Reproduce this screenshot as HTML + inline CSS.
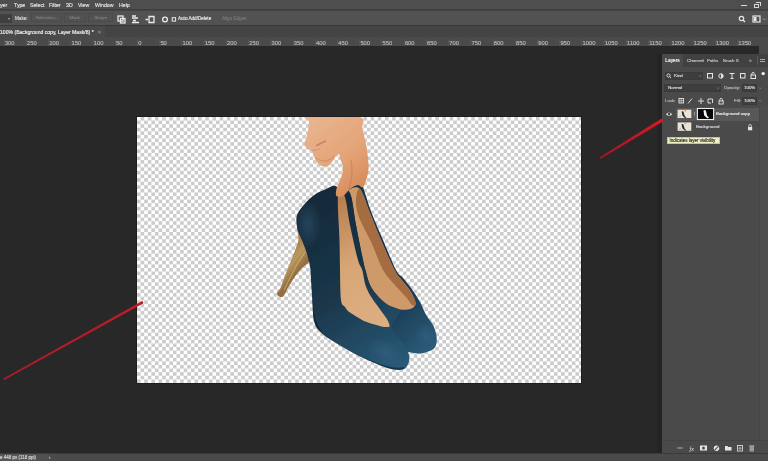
<!DOCTYPE html>
<html><head><meta charset="utf-8">
<style>
*{margin:0;padding:0;box-sizing:border-box}
html,body{width:768px;height:461px;overflow:hidden;background:#282828;font-family:"Liberation Sans",sans-serif;color:#d8d8d8;position:relative}
.a{position:absolute}
.t{position:absolute;white-space:nowrap}
#menubar{left:0;top:0;width:768px;height:10px;background:#4e4e4e;font-size:5.2px;line-height:10px;color:#e2e2e2;border-bottom:1px solid #3e3e3e}
#optbar{left:0;top:10px;width:768px;height:15px;background:#525252;border-top:1px solid #444;font-size:4.6px;line-height:15px;color:#d4d4d4}
.btn{position:absolute;top:2px;height:9px;border:1px solid #4a4a4a;background:#525252;color:#7e7e7e;font-size:4.4px;line-height:7px;text-align:center}
#tabbar{left:0;top:25px;width:768px;height:12px;background:#444444;border-top:1px solid #383838}
#tab{left:0;top:26px;width:105px;height:11px;background:#4a4a4a;font-size:5.1px;line-height:12px;color:#eeeeee}
#ruler{left:0;top:37px;width:759px;height:9px;background:#4a4a4a;overflow:hidden}
#ruler span{position:absolute;top:3px;font-size:5.8px;line-height:6px;color:#b8b8b8}
#ruler i{position:absolute;width:1px;background:#535353}
#rdock{left:759px;top:37px;width:9px;height:17px;background:#4a4a4a}
#canvas{left:137px;top:117px;width:444px;height:266px;background-color:#fff;
 background-image:conic-gradient(#cccccc 25%,#fff 0 50%,#cccccc 0 75%,#fff 0);
 background-size:7.2px 7.2px;box-shadow:0 0 0 1px #1e1e1e}
#pborder{left:657px;top:54px;width:5px;height:399px;background:#242424}
#panel{left:662px;top:54px;width:106px;height:400px;background:#4a4a4a;font-size:4.4px;color:#d0d0d0;overflow:hidden}
#ptabs{left:0;top:0;width:106px;height:13px;background:#414141}
#ptab1{left:0;top:0;width:21px;height:13px;background:#4a4a4a;font-size:4.8px;line-height:13px;color:#f2f2f2;text-align:center}
.field{position:absolute;background:#3e3e3e;border:1px solid #3a3a3a}
#status{left:0;top:453px;width:768px;height:8px;background:#4a4a4a;font-size:4.5px;line-height:8px;color:#d8d8d8;border-top:1px solid #3a3a3a}
svg{position:absolute;left:0;top:0}
.t,#menubar,#optbar,#tab,#ruler,#panel,#status{will-change:transform}
.t,#ptab1,.btn,#ruler span,.tip{-webkit-text-stroke:0.15px currentColor}
</style></head><body>
<div id="menubar" class="a">
 <span class="t" style="left:0">yer</span><span class="t" style="left:13.7px">Type</span><span class="t" style="left:30px">Select</span><span class="t" style="left:48.7px">Filter</span><span class="t" style="left:65.5px">3D</span><span class="t" style="left:77.5px">View</span><span class="t" style="left:94.5px">Window</span><span class="t" style="left:118.7px">Help</span>
 <div class="a" style="left:741px;top:5px;width:6px;height:1px;background:#d8d8d8"></div>
 <div class="a" style="left:754px;top:3.5px;width:5px;height:4px;border:1px solid #d8d8d8"></div>
 <div class="a" style="left:756px;top:1.5px;width:5px;height:4px;border-top:1px solid #d8d8d8;border-right:1px solid #d8d8d8"></div>
</div>
<div id="optbar" class="a">
 <div class="a" style="left:0;top:3px;width:12px;height:9px;background:#3f3f3f"></div>
 <div class="a" style="left:8px;top:7px;width:0;height:0;border-left:1.5px solid transparent;border-right:1.5px solid transparent;border-top:2px solid #aaa"></div>
 <span class="t" style="left:15px;color:#dadada">Make:</span>
 <div class="btn" style="left:31px;width:31px">Selection...</div>
 <div class="btn" style="left:63.5px;width:22.5px">Mask</div>
 <div class="btn" style="left:88px;width:25px">Shape</div>
 <svg width="768" height="15" style="left:0;top:0">
  <g fill="none" stroke="#ececec" stroke-width="1.3">
   <rect x="118" y="5" width="5" height="5"/><rect x="120.5" y="7.5" width="4.5" height="4.5"/>
   <path d="M132 5h4M132 7h6M133 9.5h3M132 11.5h7"/>
   <path d="M145.5 8.5h2.5M149 5.5h5v6h-5z"/>
   <circle cx="165" cy="8.5" r="2.4"/>
   <rect x="172.2" y="6.7" width="3.4" height="3.4" stroke-width="1"/>
  </g>
  <circle cx="741.5" cy="7.5" r="2.2" fill="none" stroke="#e6e6e6" stroke-width="1.2"/>
  <path d="M743 9l2 2" stroke="#e6e6e6" stroke-width="1.3"/>
  <rect x="753" y="5" width="7" height="6" fill="none" stroke="#e6e6e6" stroke-width="1.2"/>
  <rect x="754" y="6" width="2.5" height="4" fill="#e6e6e6"/>
  <path d="M763 7.5l1.5 1.5 1.5-1.5" stroke="#aaa" fill="none" stroke-width="0.8"/>
 </svg>
 <span class="t" style="left:178.4px;color:#e6e6e6">Auto Add/Delete</span>
 <span class="t" style="left:222px;color:#787878">Align Edges</span>
</div>
<div id="tabbar" class="a"></div>
<div id="tab" class="a"><span class="t" style="left:0">100% (Background copy, Layer Mask/8) *</span><span class="t" style="left:97.5px;color:#8e8e8e;font-size:5px">×</span></div>
<div id="ruler" class="a"><i style="left:3.7px;top:2px;height:7px"></i><span style="left:4.9px">300</span><i style="left:25.9px;top:2px;height:7px"></i><span style="left:27.1px">250</span><i style="left:48.1px;top:2px;height:7px"></i><span style="left:49.3px">200</span><i style="left:70.3px;top:2px;height:7px"></i><span style="left:71.5px">150</span><i style="left:92.6px;top:2px;height:7px"></i><span style="left:93.8px">100</span><i style="left:114.8px;top:2px;height:7px"></i><span style="left:116.0px">50</span><i style="left:137.0px;top:2px;height:7px"></i><span style="left:138.2px">0</span><i style="left:159.2px;top:2px;height:7px"></i><span style="left:160.4px">50</span><i style="left:181.4px;top:2px;height:7px"></i><span style="left:182.6px">100</span><i style="left:203.7px;top:2px;height:7px"></i><span style="left:204.9px">150</span><i style="left:225.9px;top:2px;height:7px"></i><span style="left:227.1px">200</span><i style="left:248.1px;top:2px;height:7px"></i><span style="left:249.3px">250</span><i style="left:270.3px;top:2px;height:7px"></i><span style="left:271.5px">300</span><i style="left:292.6px;top:2px;height:7px"></i><span style="left:293.8px">350</span><i style="left:314.8px;top:2px;height:7px"></i><span style="left:316.0px">400</span><i style="left:337.0px;top:2px;height:7px"></i><span style="left:338.2px">450</span><i style="left:359.2px;top:2px;height:7px"></i><span style="left:360.4px">500</span><i style="left:381.4px;top:2px;height:7px"></i><span style="left:382.6px">550</span><i style="left:403.7px;top:2px;height:7px"></i><span style="left:404.9px">600</span><i style="left:425.9px;top:2px;height:7px"></i><span style="left:427.1px">650</span><i style="left:448.1px;top:2px;height:7px"></i><span style="left:449.3px">700</span><i style="left:470.3px;top:2px;height:7px"></i><span style="left:471.5px">750</span><i style="left:492.6px;top:2px;height:7px"></i><span style="left:493.8px">800</span><i style="left:514.8px;top:2px;height:7px"></i><span style="left:516.0px">850</span><i style="left:537.0px;top:2px;height:7px"></i><span style="left:538.2px">900</span><i style="left:559.2px;top:2px;height:7px"></i><span style="left:560.4px">950</span><i style="left:581.4px;top:2px;height:7px"></i><span style="left:582.6px">1000</span><i style="left:603.7px;top:2px;height:7px"></i><span style="left:604.9px">1050</span><i style="left:625.9px;top:2px;height:7px"></i><span style="left:627.1px">1100</span><i style="left:648.1px;top:2px;height:7px"></i><span style="left:649.3px">1150</span><i style="left:670.3px;top:2px;height:7px"></i><span style="left:671.5px">1200</span><i style="left:692.6px;top:2px;height:7px"></i><span style="left:693.8px">1250</span><i style="left:714.8px;top:2px;height:7px"></i><span style="left:716.0px">1300</span><i style="left:737.0px;top:2px;height:7px"></i><span style="left:738.2px">1350</span></div>
<div id="rdock" class="a"></div>
<div id="canvas" class="a"></div>
<div id="pborder" class="a"></div>
<div id="panel" class="a">
 <div id="ptabs" class="a">
  <div id="ptab1" class="a">Layers</div>
  <span class="t" style="left:25px;top:0;line-height:13px;color:#c4c4c4;width:17px;overflow:hidden">Channels</span>
  <span class="t" style="left:45px;top:0;line-height:13px;color:#c4c4c4">Paths</span>
  <span class="t" style="left:60.5px;top:0;line-height:13px;color:#c4c4c4">Brush S</span>
  <span class="t" style="left:87px;top:0;line-height:13px;color:#a0a0a0;font-size:5px">»</span>
  <div class="a" style="left:95px;top:2px;width:1px;height:9px;background:#5a5a5a"></div>
  <div class="a" style="left:98px;top:5px;width:5px;height:3px;border-top:1px solid #aaa;border-bottom:1px solid #aaa"></div>
 </div>
 <!-- kind row -->
 <div class="field" style="left:3px;top:18px;width:38px;height:8px"></div>
 <span class="t" style="left:12px;top:18px;line-height:8px;color:#dddddd">Kind</span>
 <svg width="106" height="40" style="left:0;top:0">
  <circle cx="6.5" cy="21.5" r="1.6" fill="none" stroke="#e0e0e0" stroke-width="0.9"/>
  <path d="M7.7 22.7l1.4 1.4" stroke="#e0e0e0" stroke-width="0.9"/>
  <path d="M37 21.5l1.2 1.2 1.2-1.2" stroke="#999" fill="none" stroke-width="0.6"/>
  <g fill="none" stroke="#e6e6e6" stroke-width="1">
   <rect x="45.5" y="19.5" width="5" height="4.5"/>
   <circle cx="59" cy="22" r="2.2"/>
   <path d="M67.5 19.5h5M70 19.5v5M68.5 24.5h3"/>
   <rect x="78.5" y="19.5" width="4.5" height="4.5"/>
   <rect x="89" y="21" width="4.5" height="3.5"/><path d="M89.8 21v-1.2a1.3 1.3 0 0 1 2.6 0"/>
  </g>
  <path d="M59 19.8a2.2 2.2 0 0 1 0 4.4z" fill="#e6e6e6"/>
  <circle cx="101.2" cy="19.6" r="1.7" fill="#f4f4f4"/>
 </svg>
 <!-- blend row -->
 <div class="field" style="left:2px;top:30px;width:57px;height:8px"></div>
 <span class="t" style="left:5.5px;top:30px;line-height:8px;color:#dddddd">Normal</span>
 <span class="t" style="left:62px;top:30px;line-height:8px;color:#bbbbbb">Opacity:</span>
 <div class="field" style="left:80px;top:30px;width:15px;height:8px"></div>
 <span class="t" style="left:82px;top:30px;line-height:8px;color:#dddddd">100%</span>
 <!-- lock row -->
 <span class="t" style="left:3px;top:42.5px;line-height:8px;color:#bbbbbb">Lock:</span>
 <span class="t" style="left:72px;top:42.5px;line-height:8px;color:#bbbbbb">Fill:</span>
 <div class="field" style="left:80px;top:42.5px;width:15px;height:8px"></div>
 <span class="t" style="left:82px;top:42.5px;line-height:8px;color:#dddddd">100%</span>
 <svg width="106" height="60" style="left:0;top:0">
  <path d="M55 33.5l1.2 1.2 1.2-1.2M97 33.5l1.2 1.2 1.2-1.2M97 46l1.2 1.2 1.2-1.2" stroke="#999" fill="none" stroke-width="0.6"/>
  <g fill="none" stroke="#e6e6e6" stroke-width="0.9">
   <rect x="17" y="44.5" width="4.5" height="4.5"/><path d="M17 46.7h4.5M19.2 44.5v4.5" stroke-width="0.6"/>
   <path d="M26 49.5l4-5"/>
   <path d="M39 44v6M36 47h6"/>
   <path d="M46 45h4.5v4M46 45v4h3"/>
   <rect x="57" y="47" width="4.2" height="3"/><path d="M57.8 47v-1.3a1.3 1.3 0 0 1 2.6 0v1.3"/>
  </g>
 </svg>
 <!-- layer rows -->
 <div class="a" style="left:14px;top:53.5px;width:83px;height:13px;background:#585858"></div>
 <svg width="106" height="90" style="left:0;top:0">
  <path d="M4 60.3q3-3.4 6.2 0q-3 3-6.2 0z" fill="#e8e8e8"/>
  <circle cx="7.1" cy="60" r="1.2" fill="#3a3a3a"/>
  <rect x="15.6" y="55.7" width="13.7" height="8.3" fill="#ebe3d4"/>
  <path d="M19.5 57.5q1.2-0.8 2 0.5l1.2 4 1.8 1.5-1.5 0.4-2.5-2.2z" fill="#1c2c3a"/>
  <path d="M21.8 55.8l0.8 1.8 1 0.2 1-1.9z" fill="#d8a47c"/>
  <path d="M18.5 61l-0.8 2" stroke="#a89060" stroke-width="0.6"/>
  <path d="M32.5 58v3.5" stroke="#b0b0b0" stroke-width="0.7"/>
  <rect x="35.4" y="54.5" width="16.2" height="11" fill="#050505" stroke="#eeeeee" stroke-width="1.1"/>
  <path d="M41.5 56.5q1.5-1 2.5 0.5l1.2 5 2 1.6-2 0.6-3-2.8z" fill="#f4f4f4"/>
  <rect x="15.6" y="68.4" width="13.7" height="8.4" fill="#ebe3d4"/>
  <path d="M19.5 70.2q1.2-0.8 2 0.5l1.2 4 1.8 1.5-1.5 0.4-2.5-2.2z" fill="#1c2c3a"/>
  <path d="M21.8 68.5l0.8 1.8 1 0.2 1-1.9z" fill="#d8a47c"/>
  <path d="M18.5 73.7l-0.8 2" stroke="#a89060" stroke-width="0.6"/>
  <path d="M5.5 73q1.5 -1.3 3 0" stroke="#3d5050" stroke-width="0.8" fill="none"/>
  <rect x="86" y="73" width="4.2" height="3.3" fill="#e6e6e6"/>
  <path d="M86.8 73v-1.2a1.3 1.3 0 0 1 2.6 0v1.2" fill="none" stroke="#e6e6e6" stroke-width="0.8"/>
 </svg>
 <span class="t" style="left:54.4px;top:56px;line-height:8px;color:#eaeaea">Background copy</span>
 <span class="t" style="left:34px;top:69px;line-height:8px;color:#dcdcdc">Background</span>
 <!-- tooltip -->
 <div class="a tip" style="left:5px;top:83px;width:53px;height:7px;background:#efefc6;border:1px solid #c4c49c;color:#2e2e2e;font-size:4.5px;line-height:5px;padding-left:1.5px;white-space:nowrap">Indicates layer visibility</div>
 <!-- scroll track line -->
 <div class="a" style="left:97px;top:52px;width:9px;height:334px;background:#4d4d4d;border-left:1px solid #464646"></div>
 <!-- footer -->
 <div class="a" style="left:0;top:386px;width:106px;height:1px;background:#434343"></div>
 <svg width="106" height="400" style="left:0;top:0">
  <rect x="15" y="393" width="6" height="2" rx="1" fill="#7a7a7a"/>
  <text x="27.5" y="396.5" font-size="6" font-style="italic" font-family="Liberation Serif" fill="#e6e6e6">fx</text>
  <rect x="38" y="391.5" width="7" height="5" fill="#e6e6e6"/>
  <circle cx="41.5" cy="394" r="1.5" fill="#4a4a4a"/>
  <circle cx="54.5" cy="394.3" r="2.7" fill="#e6e6e6"/>
  <path d="M52.6 396.2l3.8-3.8" stroke="#4a4a4a" stroke-width="1.1"/>
  <path d="M63 392h2.5l0.8 1h3.2v3.5h-6.5z" fill="#e6e6e6"/>
  <rect x="75.5" y="391.5" width="5" height="5.5" fill="none" stroke="#e6e6e6" stroke-width="0.8"/>
  <path d="M78 392.5v3.5M76.3 394.2h3.5" stroke="#e6e6e6" stroke-width="0.6"/>
  <rect x="87.5" y="392" width="4.5" height="5.5" fill="#9a9a9a"/>
  <rect x="87" y="391.3" width="5.5" height="0.8" fill="#9a9a9a"/>
 </svg>
</div>
<div id="status" class="a">
 <div class="a" style="left:0;top:0;width:35px;height:7px;background:#585858"></div>
 <div class="a" style="left:35px;top:0;width:14px;height:7px;background:#505050"></div>
 <span class="t" style="left:0;top:-0.5px">e 448 px (118 ppi)</span>
 <span class="t" style="left:49px;top:-0.5px;color:#cccccc">&#x203A;</span>
</div>
<!-- shoe + hand -->
<svg width="768" height="461" viewBox="0 0 768 461">
 <defs>
  <clipPath id="cv"><rect x="137" y="117" width="444" height="266"/></clipPath>
  <filter id="bl" x="-10%" y="-10%" width="120%" height="120%"><feGaussianBlur stdDeviation="0.45"/></filter>
  <linearGradient id="navy1" gradientUnits="userSpaceOnUse" x1="300" y1="200" x2="400" y2="370">
   <stop offset="0" stop-color="#16293a"/><stop offset="0.5" stop-color="#1a3549"/><stop offset="0.85" stop-color="#24506c"/><stop offset="1" stop-color="#2a5a78"/>
  </linearGradient>
  <linearGradient id="toe2" gradientUnits="userSpaceOnUse" x1="390" y1="300" x2="436" y2="350">
   <stop offset="0" stop-color="#183650"/><stop offset="1" stop-color="#2c5e7c"/>
  </linearGradient>
  <linearGradient id="heel" gradientUnits="userSpaceOnUse" x1="290" y1="250" x2="305" y2="262">
   <stop offset="0" stop-color="#b08a52"/><stop offset="0.5" stop-color="#c8a46a"/><stop offset="1" stop-color="#9a7444"/>
  </linearGradient>
  <pattern id="stripes" width="2" height="2" patternUnits="userSpaceOnUse" patternTransform="rotate(30)">
   <rect width="2" height="0.7" fill="#6e5028" opacity="0.45"/>
  </pattern>
  <linearGradient id="hand" gradientUnits="userSpaceOnUse" x1="305" y1="120" x2="365" y2="195">
   <stop offset="0" stop-color="#e8b690"/><stop offset="0.55" stop-color="#e4a478"/><stop offset="1" stop-color="#d48654"/>
  </linearGradient>
  <linearGradient id="lin1" gradientUnits="userSpaceOnUse" x1="340" y1="200" x2="380" y2="325">
   <stop offset="0" stop-color="#b88050"/><stop offset="0.5" stop-color="#d8a676"/><stop offset="1" stop-color="#dcae80"/>
  </linearGradient>
  <radialGradient id="hl"><stop offset="0" stop-color="#3a6888"/><stop offset="1" stop-color="#3a6888" stop-opacity="0"/></radialGradient>
  <clipPath id="s1clip"><path d="M335.4 185.9 C332.5 185.2 330.0 187.4 326.6 188.8 C323.2 190.2 318.5 192.2 314.9 194.6 C311.3 197.0 307.9 200.5 305.1 203.4 C302.3 206.3 299.8 209.6 298.3 212.2 C296.9 214.8 296.5 216.1 296.4 219.0 C296.3 221.9 296.8 226.1 297.6 229.5 C298.5 232.9 300.2 236.1 301.5 239.3 C302.8 242.6 304.3 245.8 305.4 249.0 C306.5 252.2 307.5 255.5 308.3 258.8 C309.1 262.1 309.8 263.7 310.3 268.6 C310.8 273.5 311.1 282.3 311.5 288.0 C311.9 293.7 312.1 297.8 312.5 303.0 C312.9 308.2 312.8 315.0 313.7 319.3 C314.6 323.6 315.0 325.8 317.6 329.0 C320.2 332.2 324.1 335.2 329.3 338.8 C334.5 342.4 342.3 346.9 348.8 350.5 C355.3 354.1 361.9 357.4 368.4 360.3 C374.9 363.2 382.7 366.5 387.9 368.1 C393.1 369.7 396.5 370.2 399.6 370.0 C402.7 369.8 404.9 369.0 406.5 367.0 C408.1 365.0 409.5 361.2 409.4 358.0 C409.3 354.8 407.8 350.8 406.0 347.5 C404.2 344.2 401.1 341.6 398.8 338.0 C396.5 334.4 391.8 330.5 392.0 326.0 C392.2 321.5 400.7 314.5 400.0 311.0 C399.3 307.5 391.8 307.5 388.0 305.0 C384.2 302.5 380.5 299.1 377.5 295.8 C374.5 292.5 372.0 289.3 370.0 285.0 C368.0 280.7 366.6 274.2 365.4 270.0 C364.2 265.8 364.6 267.5 363.0 260.0 C361.4 252.5 358.0 235.7 356.0 225.0 C354.0 214.3 353.0 201.3 351.0 196.0 C349.0 190.7 346.6 194.7 344.0 193.0 C341.4 191.3 338.3 186.6 335.4 185.9Z"/><path d="M352.0 183.0 C355.0 180.8 359.0 181.8 361.0 183.0 C363.0 184.2 362.2 184.8 364.0 190.0 C365.8 195.2 368.8 205.7 372.0 214.0 C375.2 222.3 379.0 230.7 383.0 240.0 C387.0 249.3 392.7 263.7 396.0 270.0 C399.3 276.3 400.5 275.0 403.0 278.0 C405.5 281.0 408.2 284.0 411.0 288.0 C413.8 292.0 417.5 297.6 420.0 302.0 C422.5 306.4 423.8 310.9 426.0 314.7 C428.2 318.5 431.2 321.4 433.0 325.0 C434.8 328.6 436.0 332.7 436.5 336.0 C437.0 339.3 436.8 342.7 436.0 345.0 C435.2 347.3 434.5 348.6 432.0 350.0 C429.5 351.4 424.4 353.1 421.0 353.5 C417.6 353.9 415.1 353.1 411.3 352.5 C407.5 351.9 402.4 353.8 398.0 350.0 C393.6 346.2 391.3 343.3 385.0 330.0 C378.7 316.7 367.0 292.3 360.0 270.0 C353.0 247.7 344.3 210.5 343.0 196.0 C341.7 181.5 349.0 185.2 352.0 183.0Z"/></clipPath>
 </defs>
 <g clip-path="url(#cv)"><g filter="url(#bl)">
  <path d="M297.0 226.0 C296.2 227.4 298.7 235.5 298.5 239.3 C298.3 243.1 296.7 245.8 295.6 249.0 C294.5 252.2 293.0 255.5 291.7 258.8 C290.4 262.1 289.1 265.3 287.8 268.6 C286.5 271.9 285.1 275.2 283.9 278.4 C282.7 281.6 281.6 285.6 280.5 288.0 C279.4 290.4 277.3 291.7 277.0 293.0 C276.7 294.3 277.5 295.4 278.5 296.0 C279.5 296.6 281.4 297.8 283.0 296.5 C284.6 295.2 286.0 291.0 287.8 288.0 C289.6 285.0 291.4 281.6 293.7 278.4 C296.0 275.2 298.9 271.5 301.5 268.6 C304.1 265.7 308.1 264.1 309.5 261.0 C310.9 257.9 311.1 255.0 310.0 250.0 C308.9 245.0 305.2 235.0 303.0 231.0 C300.8 227.0 297.8 224.6 297.0 226.0Z" fill="url(#heel)"/><path d="M297.0 226.0 C296.2 227.4 298.7 235.5 298.5 239.3 C298.3 243.1 296.7 245.8 295.6 249.0 C294.5 252.2 293.0 255.5 291.7 258.8 C290.4 262.1 289.1 265.3 287.8 268.6 C286.5 271.9 285.1 275.2 283.9 278.4 C282.7 281.6 281.6 285.6 280.5 288.0 C279.4 290.4 277.3 291.7 277.0 293.0 C276.7 294.3 277.5 295.4 278.5 296.0 C279.5 296.6 281.4 297.8 283.0 296.5 C284.6 295.2 286.0 291.0 287.8 288.0 C289.6 285.0 291.4 281.6 293.7 278.4 C296.0 275.2 298.9 271.5 301.5 268.6 C304.1 265.7 308.1 264.1 309.5 261.0 C310.9 257.9 311.1 255.0 310.0 250.0 C308.9 245.0 305.2 235.0 303.0 231.0 C300.8 227.0 297.8 224.6 297.0 226.0Z" fill="url(#stripes)"/>
  <g stroke="#7a5c30" stroke-width="0.5" opacity="0.55"></g><path d="M284 290 L296 266 L305 252" stroke="#e0c890" stroke-width="1.2" fill="none" opacity="0.5"/>
  <path d="M352.0 183.0 C355.0 180.8 359.0 181.8 361.0 183.0 C363.0 184.2 362.2 184.8 364.0 190.0 C365.8 195.2 368.8 205.7 372.0 214.0 C375.2 222.3 379.0 230.7 383.0 240.0 C387.0 249.3 392.7 263.7 396.0 270.0 C399.3 276.3 400.5 275.0 403.0 278.0 C405.5 281.0 408.2 284.0 411.0 288.0 C413.8 292.0 417.5 297.6 420.0 302.0 C422.5 306.4 423.8 310.9 426.0 314.7 C428.2 318.5 431.2 321.4 433.0 325.0 C434.8 328.6 436.0 332.7 436.5 336.0 C437.0 339.3 436.8 342.7 436.0 345.0 C435.2 347.3 434.5 348.6 432.0 350.0 C429.5 351.4 424.4 353.1 421.0 353.5 C417.6 353.9 415.1 353.1 411.3 352.5 C407.5 351.9 402.4 353.8 398.0 350.0 C393.6 346.2 391.3 343.3 385.0 330.0 C378.7 316.7 367.0 292.3 360.0 270.0 C353.0 247.7 344.3 210.5 343.0 196.0 C341.7 181.5 349.0 185.2 352.0 183.0Z" fill="url(#toe2)"/>
  <path d="M349.0 190.0 C347.5 191.2 349.8 190.2 351.0 196.0 C352.2 201.8 354.0 214.3 356.0 225.0 C358.0 235.7 361.4 252.5 363.0 260.0 C364.6 267.5 364.2 265.8 365.4 270.0 C366.6 274.2 368.0 280.7 370.0 285.0 C372.0 289.3 374.5 292.5 377.5 295.8 C380.5 299.1 384.2 302.7 388.0 305.0 C391.8 307.3 396.2 308.9 400.0 309.5 C403.8 310.1 408.3 309.5 410.9 308.7 C413.5 307.9 415.0 306.3 415.5 304.5 C416.0 302.7 415.1 300.6 414.0 298.0 C412.9 295.4 411.2 292.2 409.0 289.0 C406.8 285.8 403.4 282.2 401.0 279.0 C398.6 275.8 397.8 276.5 394.5 270.0 C391.2 263.5 385.1 249.5 381.0 240.0 C376.9 230.5 373.5 221.5 370.0 213.0 C366.5 204.5 363.5 192.8 360.0 189.0 C356.5 185.2 350.5 188.8 349.0 190.0Z" fill="#cf9a6a"/>
  <path d="M360.0 189.0 C362.3 191.2 366.5 204.5 370.0 213.0 C373.5 221.5 376.9 230.5 381.0 240.0 C385.1 249.5 391.2 263.5 394.5 270.0 C397.8 276.5 398.6 275.8 401.0 279.0 C403.4 282.2 406.8 285.8 409.0 289.0 C411.2 292.2 412.9 295.4 414.0 298.0 C415.1 300.6 415.8 303.3 415.5 304.5 C415.2 305.7 413.6 306.2 412.0 305.0 C410.4 303.8 409.0 300.5 406.0 297.0 C403.0 293.5 397.8 288.5 394.0 284.0 C390.2 279.5 386.7 276.7 383.0 270.0 C379.3 263.3 376.0 252.8 372.0 244.0 C368.0 235.2 361.7 224.3 359.0 217.0 C356.3 209.7 355.8 204.7 356.0 200.0 C356.2 195.3 357.7 186.8 360.0 189.0Z" fill="#a46c40"/>
  <path d="M335.4 185.9 C332.5 185.2 330.0 187.4 326.6 188.8 C323.2 190.2 318.5 192.2 314.9 194.6 C311.3 197.0 307.9 200.5 305.1 203.4 C302.3 206.3 299.8 209.6 298.3 212.2 C296.9 214.8 296.5 216.1 296.4 219.0 C296.3 221.9 296.8 226.1 297.6 229.5 C298.5 232.9 300.2 236.1 301.5 239.3 C302.8 242.6 304.3 245.8 305.4 249.0 C306.5 252.2 307.5 255.5 308.3 258.8 C309.1 262.1 309.8 263.7 310.3 268.6 C310.8 273.5 311.1 282.3 311.5 288.0 C311.9 293.7 312.1 297.8 312.5 303.0 C312.9 308.2 312.8 315.0 313.7 319.3 C314.6 323.6 315.0 325.8 317.6 329.0 C320.2 332.2 324.1 335.2 329.3 338.8 C334.5 342.4 342.3 346.9 348.8 350.5 C355.3 354.1 361.9 357.4 368.4 360.3 C374.9 363.2 382.7 366.5 387.9 368.1 C393.1 369.7 396.5 370.2 399.6 370.0 C402.7 369.8 404.9 369.0 406.5 367.0 C408.1 365.0 409.5 361.2 409.4 358.0 C409.3 354.8 407.8 350.8 406.0 347.5 C404.2 344.2 401.1 341.6 398.8 338.0 C396.5 334.4 391.8 330.5 392.0 326.0 C392.2 321.5 400.7 314.5 400.0 311.0 C399.3 307.5 391.8 307.5 388.0 305.0 C384.2 302.5 380.5 299.1 377.5 295.8 C374.5 292.5 372.0 289.3 370.0 285.0 C368.0 280.7 366.6 274.2 365.4 270.0 C364.2 265.8 364.6 267.5 363.0 260.0 C361.4 252.5 358.0 235.7 356.0 225.0 C354.0 214.3 353.0 201.3 351.0 196.0 C349.0 190.7 346.6 194.7 344.0 193.0 C341.4 191.3 338.3 186.6 335.4 185.9Z" fill="url(#navy1)"/>
  <g clip-path="url(#s1clip)">
   <ellipse cx="308" cy="224" rx="13" ry="24" fill="url(#hl)" opacity="0.4"/>
   <ellipse cx="385" cy="352" rx="20" ry="12" fill="url(#hl)" opacity="0.45" transform="rotate(25 385 352)"/>
   <ellipse cx="425" cy="335" rx="10" ry="12" fill="url(#hl)" opacity="0.4"/>
   <path d="M312 300 Q312 322 322 334 Q345 352 372 362 Q392 371 404 368" stroke="#0c1822" stroke-width="2" fill="none" opacity="0.55"/>
  </g>
  <path d="M338.0 196.0 C337.1 203.3 339.2 227.7 339.5 240.0 C339.8 252.3 339.8 260.0 340.0 270.0 C340.2 280.0 340.2 293.8 341.0 300.0 C341.8 306.2 343.5 304.9 345.0 307.0 C346.5 309.1 346.6 310.1 350.0 312.5 C353.4 314.9 360.3 319.3 365.4 321.6 C370.5 323.9 377.0 325.3 380.5 326.2 C384.0 327.1 385.1 327.0 386.6 327.0 C388.1 327.0 389.6 327.4 389.6 326.0 C389.6 324.6 388.4 321.6 386.6 318.6 C384.8 315.6 381.5 311.6 379.0 308.0 C376.5 304.4 373.7 301.1 371.4 297.3 C369.1 293.5 366.9 289.6 365.4 285.0 C363.9 280.4 363.5 274.2 362.3 270.0 C361.1 265.8 360.1 267.5 358.0 260.0 C355.9 252.5 352.2 235.7 350.0 225.0 C347.8 214.3 346.6 200.8 344.6 196.0 C342.6 191.2 338.9 188.7 338.0 196.0Z" fill="url(#lin1)"/>
  <path d="M307.5 116.8 C299.2 117.7 309.1 118.9 309.0 122.0 C308.9 125.1 307.8 131.6 307.0 135.3 C306.2 139.0 304.5 142.0 304.4 144.0 C304.3 146.0 305.4 146.6 306.5 147.5 C307.6 148.4 310.3 148.3 311.3 149.2 C312.3 150.1 311.8 150.8 312.6 152.8 C313.4 154.8 314.6 159.1 316.2 161.3 C317.8 163.5 320.1 165.6 322.3 166.2 C324.5 166.8 327.0 167.0 329.6 165.0 C332.2 163.0 336.1 154.7 338.0 154.0 C339.9 153.3 340.2 158.6 341.0 161.0 C341.8 163.4 343.0 165.7 343.0 168.5 C343.0 171.3 342.1 174.3 341.0 177.7 C339.9 181.1 337.2 185.6 336.5 188.7 C335.8 191.8 335.4 194.8 336.5 196.0 C337.6 197.2 340.7 197.2 343.0 196.0 C345.3 194.8 347.9 190.5 350.3 188.7 C352.8 186.9 355.6 185.3 357.7 185.0 C359.8 184.7 361.5 188.7 363.2 186.9 C364.9 185.1 366.9 178.1 367.8 174.0 C368.7 169.9 368.7 167.4 368.4 162.5 C368.1 157.6 367.0 150.0 366.0 144.3 C365.0 138.7 363.5 133.2 362.3 128.6 C361.1 124.0 367.8 118.8 358.7 116.8 C349.6 114.8 315.8 115.9 307.5 116.8Z" fill="url(#hand)"/>
  <path d="M307 148 Q312 152 320 149" stroke="#c07058" stroke-width="1.2" fill="none" opacity="0.4"/>
  <path d="M316 158 Q326 165 334 156" stroke="#c07850" stroke-width="1.5" fill="none" opacity="0.35"/>
  <path d="M351 160 Q354 175 349 189" stroke="#b87048" stroke-width="1.2" fill="none" opacity="0.45"/>
  <path d="M316 146 Q321 143 326 141" stroke="#b05a48" stroke-width="1.5" fill="none" opacity="0.5"/>
 </g></g>
<linearGradient id="ar1" gradientUnits="userSpaceOnUse" x1="4.3" y1="379" x2="142" y2="302.6"><stop offset="0" stop-color="#a81c28"/><stop offset="1" stop-color="#c01c28"/></linearGradient><path d="M4.74 379.79 L142.63 303.74 L141.37 301.46 L3.86 378.21Z" fill="url(#ar1)"/><circle cx="4.3" cy="379" r="0.9" fill="#a81c28"/><circle cx="142" cy="302.6" r="1.3" fill="#c01c28"/><linearGradient id="ar2" gradientUnits="userSpaceOnUse" x1="600.6" y1="157.7" x2="661.5" y2="120.5"><stop offset="0" stop-color="#a01826"/><stop offset="1" stop-color="#d41826"/></linearGradient><path d="M601.07 158.47 L662.39 121.95 L660.61 119.05 L600.13 156.93Z" fill="url(#ar2)"/><circle cx="600.6" cy="157.7" r="0.9" fill="#a01826"/><circle cx="661.5" cy="120.5" r="1.7" fill="#d41826"/>
</svg>

</body></html>
